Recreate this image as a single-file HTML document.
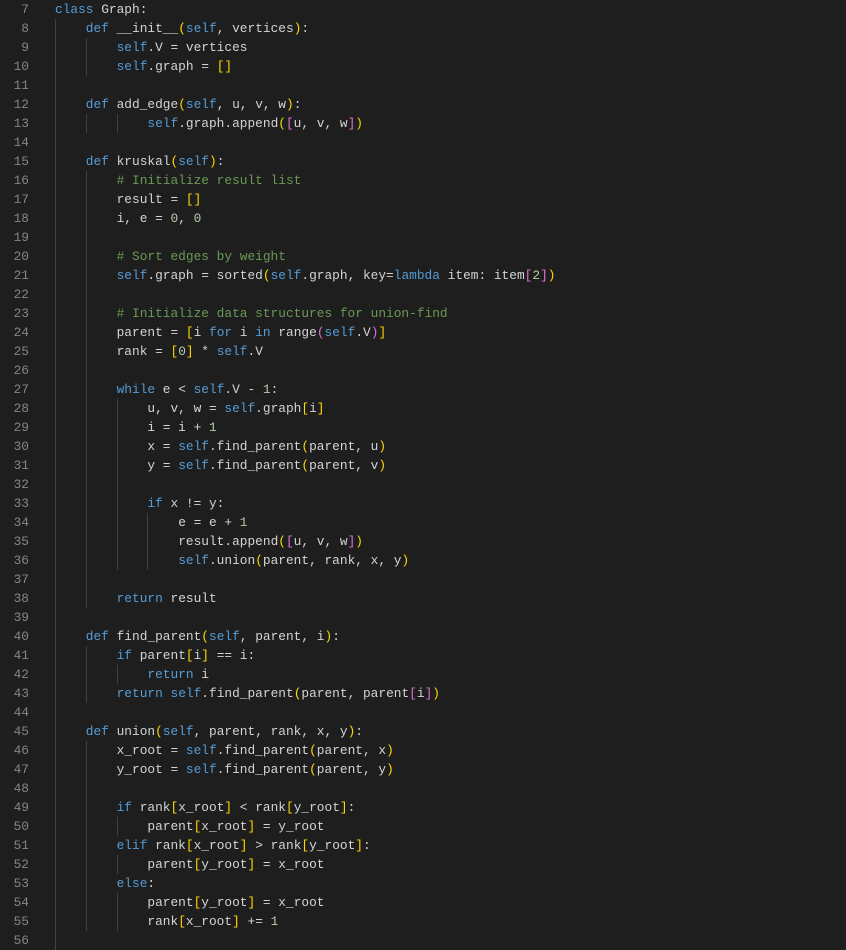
<!DOCTYPE html><html><head><meta charset="utf-8"><style>
body{margin:0;background:#1e1e1e;width:846px;height:944px;overflow:hidden}
.ed{position:absolute;left:0;top:0;font-family:"Liberation Mono",monospace;font-size:12.83px;color:#d4d4d4}
.l{height:19px;line-height:19px;white-space:pre;position:relative}
.n{display:inline-block;width:29px;text-align:right;color:#858585;margin-right:26px}
i{display:inline-block;width:30.8px;height:19px;vertical-align:top;box-shadow:inset 1px 0 0 #404040;font-style:normal}
.k{color:#569cd6}.c{color:#6a9955}.d{color:#b5cea8}.g{color:#ffd700}.p{color:#da70d6}
</style></head><body><div class="ed">
<div class="l"><span class="n">7</span><span class="k">class</span> Graph:</div>
<div class="l"><span class="n">8</span><i></i><span class="k">def</span> __init__<span class="g">(</span><span class="k">self</span>, vertices<span class="g">)</span>:</div>
<div class="l"><span class="n">9</span><i></i><i></i><span class="k">self</span>.V = vertices</div>
<div class="l"><span class="n">10</span><i></i><i></i><span class="k">self</span>.graph = <span class="g">[]</span></div>
<div class="l"><span class="n">11</span><i></i></div>
<div class="l"><span class="n">12</span><i></i><span class="k">def</span> add_edge<span class="g">(</span><span class="k">self</span>, u, v, w<span class="g">)</span>:</div>
<div class="l"><span class="n">13</span><i></i><i></i><i></i><span class="k">self</span>.graph.append<span class="g">(</span><span class="p">[</span>u, v, w<span class="p">]</span><span class="g">)</span></div>
<div class="l"><span class="n">14</span><i></i></div>
<div class="l"><span class="n">15</span><i></i><span class="k">def</span> kruskal<span class="g">(</span><span class="k">self</span><span class="g">)</span>:</div>
<div class="l"><span class="n">16</span><i></i><i></i><span class="c"># Initialize result list</span></div>
<div class="l"><span class="n">17</span><i></i><i></i>result = <span class="g">[]</span></div>
<div class="l"><span class="n">18</span><i></i><i></i>i, e = <span class="d">0</span>, <span class="d">0</span></div>
<div class="l"><span class="n">19</span><i></i><i></i></div>
<div class="l"><span class="n">20</span><i></i><i></i><span class="c"># Sort edges by weight</span></div>
<div class="l"><span class="n">21</span><i></i><i></i><span class="k">self</span>.graph = sorted<span class="g">(</span><span class="k">self</span>.graph, key=<span class="k">lambda</span> item: item<span class="p">[</span><span class="d">2</span><span class="p">]</span><span class="g">)</span></div>
<div class="l"><span class="n">22</span><i></i><i></i></div>
<div class="l"><span class="n">23</span><i></i><i></i><span class="c"># Initialize data structures for union-find</span></div>
<div class="l"><span class="n">24</span><i></i><i></i>parent = <span class="g">[</span>i <span class="k">for</span> i <span class="k">in</span> range<span class="p">(</span><span class="k">self</span>.V<span class="p">)</span><span class="g">]</span></div>
<div class="l"><span class="n">25</span><i></i><i></i>rank = <span class="g">[</span><span class="d">0</span><span class="g">]</span> * <span class="k">self</span>.V</div>
<div class="l"><span class="n">26</span><i></i><i></i></div>
<div class="l"><span class="n">27</span><i></i><i></i><span class="k">while</span> e &lt; <span class="k">self</span>.V - <span class="d">1</span>:</div>
<div class="l"><span class="n">28</span><i></i><i></i><i></i>u, v, w = <span class="k">self</span>.graph<span class="g">[</span>i<span class="g">]</span></div>
<div class="l"><span class="n">29</span><i></i><i></i><i></i>i = i + <span class="d">1</span></div>
<div class="l"><span class="n">30</span><i></i><i></i><i></i>x = <span class="k">self</span>.find_parent<span class="g">(</span>parent, u<span class="g">)</span></div>
<div class="l"><span class="n">31</span><i></i><i></i><i></i>y = <span class="k">self</span>.find_parent<span class="g">(</span>parent, v<span class="g">)</span></div>
<div class="l"><span class="n">32</span><i></i><i></i><i></i></div>
<div class="l"><span class="n">33</span><i></i><i></i><i></i><span class="k">if</span> x != y:</div>
<div class="l"><span class="n">34</span><i></i><i></i><i></i><i></i>e = e + <span class="d">1</span></div>
<div class="l"><span class="n">35</span><i></i><i></i><i></i><i></i>result.append<span class="g">(</span><span class="p">[</span>u, v, w<span class="p">]</span><span class="g">)</span></div>
<div class="l"><span class="n">36</span><i></i><i></i><i></i><i></i><span class="k">self</span>.union<span class="g">(</span>parent, rank, x, y<span class="g">)</span></div>
<div class="l"><span class="n">37</span><i></i><i></i></div>
<div class="l"><span class="n">38</span><i></i><i></i><span class="k">return</span> result</div>
<div class="l"><span class="n">39</span><i></i></div>
<div class="l"><span class="n">40</span><i></i><span class="k">def</span> find_parent<span class="g">(</span><span class="k">self</span>, parent, i<span class="g">)</span>:</div>
<div class="l"><span class="n">41</span><i></i><i></i><span class="k">if</span> parent<span class="g">[</span>i<span class="g">]</span> == i:</div>
<div class="l"><span class="n">42</span><i></i><i></i><i></i><span class="k">return</span> i</div>
<div class="l"><span class="n">43</span><i></i><i></i><span class="k">return</span> <span class="k">self</span>.find_parent<span class="g">(</span>parent, parent<span class="p">[</span>i<span class="p">]</span><span class="g">)</span></div>
<div class="l"><span class="n">44</span><i></i></div>
<div class="l"><span class="n">45</span><i></i><span class="k">def</span> union<span class="g">(</span><span class="k">self</span>, parent, rank, x, y<span class="g">)</span>:</div>
<div class="l"><span class="n">46</span><i></i><i></i>x_root = <span class="k">self</span>.find_parent<span class="g">(</span>parent, x<span class="g">)</span></div>
<div class="l"><span class="n">47</span><i></i><i></i>y_root = <span class="k">self</span>.find_parent<span class="g">(</span>parent, y<span class="g">)</span></div>
<div class="l"><span class="n">48</span><i></i><i></i></div>
<div class="l"><span class="n">49</span><i></i><i></i><span class="k">if</span> rank<span class="g">[</span>x_root<span class="g">]</span> &lt; rank<span class="g">[</span>y_root<span class="g">]</span>:</div>
<div class="l"><span class="n">50</span><i></i><i></i><i></i>parent<span class="g">[</span>x_root<span class="g">]</span> = y_root</div>
<div class="l"><span class="n">51</span><i></i><i></i><span class="k">elif</span> rank<span class="g">[</span>x_root<span class="g">]</span> &gt; rank<span class="g">[</span>y_root<span class="g">]</span>:</div>
<div class="l"><span class="n">52</span><i></i><i></i><i></i>parent<span class="g">[</span>y_root<span class="g">]</span> = x_root</div>
<div class="l"><span class="n">53</span><i></i><i></i><span class="k">else</span>:</div>
<div class="l"><span class="n">54</span><i></i><i></i><i></i>parent<span class="g">[</span>y_root<span class="g">]</span> = x_root</div>
<div class="l"><span class="n">55</span><i></i><i></i><i></i>rank<span class="g">[</span>x_root<span class="g">]</span> += <span class="d">1</span></div>
<div class="l"><span class="n">56</span><i></i></div>
</div></body></html>
